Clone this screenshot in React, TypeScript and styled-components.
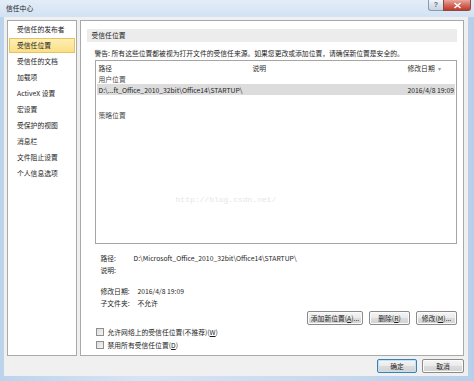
import React from "react";
import styled, { createGlobalStyle } from "styled-components";

const GlobalStyle = createGlobalStyle`
  html, body {
    margin: 0;
    padding: 0;
    background: #ffffff;
  }
  body {
    font-family: "Noto Sans CJK SC", "Noto Sans", sans-serif;
    font-size: 6.8px;
    color: #1e1e1e;
  }
  * {
    box-sizing: border-box;
  }
`;

const navItems = [
  "受信任的发布者",
  "受信任位置",
  "受信任的文档",
  "加载项",
  "ActiveX 设置",
  "宏设置",
  "受保护的视图",
  "消息栏",
  "文件阻止设置",
  "个人信息选项",
];

const App: React.FC = () => {
  return (
    <>
      <GlobalStyle />
      <Window>
        <TitleBar>
          <Title>信任中心</Title>
          <CaptionButtons>
            <HelpButton>?</HelpButton>
            <CloseButton>
              <svg width="9" height="7" viewBox="0 0 9 7">
                <path d="M1.5 1 L7.5 6 M7.5 1 L1.5 6" stroke="#ffffff" strokeWidth="1.6" />
              </svg>
            </CloseButton>
          </CaptionButtons>
        </TitleBar>

        <Client>
          <Main>
            <NavPanel>
              {navItems.map((item) => (
                <NavItem key={item} $active={item === "受信任位置"}>
                  {item}
                </NavItem>
              ))}
            </NavPanel>

            <ContentPanel>
              <SectionHeader>受信任位置</SectionHeader>
              <Body>
                <Warning>
                  警告: 所有这些位置都被视为打开文件的受信任来源。如果您更改或添加位置，请确保新位置是安全的。
                </Warning>

                <ListBox>
                  <HeaderRow>
                    <PathCol>路径</PathCol>
                    <DescCol>说明</DescCol>
                    <DateCol>
                      修改日期 <SortArrow>▾</SortArrow>
                    </DateCol>
                  </HeaderRow>
                  <GroupRow>用户位置</GroupRow>
                  <DataRow $selected>
                    <PathCol>D:\...ft_Office_2010_32bit\Office14\STARTUP\</PathCol>
                    <DescCol />
                    <DateCol $right>2016/4/8 19:09</DateCol>
                  </DataRow>
                  <GroupRow $gap>策略位置</GroupRow>
                  <Watermark>http://blog.csdn.net/</Watermark>
                </ListBox>

                <Details>
                  <DetailRow $labelWidth={33}>
                    <span>路径:</span>
                    <span>D:\Microsoft_Office_2010_32bit\Office14\STARTUP\</span>
                  </DetailRow>
                  <DetailRow $labelWidth={33}>
                    <span>说明:</span>
                    <span />
                  </DetailRow>
                  <DetailRow $labelWidth={37} $spaced>
                    <span>修改日期:</span>
                    <span>2016/4/8 19:09</span>
                  </DetailRow>
                  <DetailRow $labelWidth={37}>
                    <span>子文件夹:</span>
                    <span>不允许</span>
                  </DetailRow>
                </Details>

                <ButtonRow>
                  <Button $width={56}>
                    添加新位置(<U>A</U>)...
                  </Button>
                  <Button $width={41}>
                    删除(<U>R</U>)
                  </Button>
                  <Button $width={41}>
                    修改(<U>M</U>)...
                  </Button>
                </ButtonRow>

                <CheckRow>
                  <CheckBox />
                  <span>
                    允许网络上的受信任位置(不推荐)(<U>W</U>)
                  </span>
                </CheckRow>
                <CheckRow>
                  <CheckBox />
                  <span>
                    禁用所有受信任位置(<U>D</U>)
                  </span>
                </CheckRow>
              </Body>
            </ContentPanel>
          </Main>

          <Footer>
            <Button $width={40} $default>
              确定
            </Button>
            <Button $width={42}>取消</Button>
          </Footer>
        </Client>
      </Window>
    </>
  );
};

export default App;

const Window = styled.div`
  width: 474px;
  height: 381px;
  display: flex;
  flex-direction: column;
  background: linear-gradient(90deg, #bcd3ec 0%, #d6e5f5 30%, #cadcf0 60%, #b8cfe9 100%);
  overflow: hidden;
`;

const TitleBar = styled.div`
  height: 17px;
  display: flex;
  align-items: flex-start;
  padding-left: 6px;
  padding-right: 3px;
  background: linear-gradient(180deg, #e3edf8 0%, #d2e2f3 100%);
`;

const Title = styled.div`
  font-size: 6.8px;
  line-height: 16px;
  color: #1a1a1a;
`;

const CaptionButtons = styled.div`
  margin-left: auto;
  display: flex;
`;

const HelpButton = styled.div`
  width: 15px;
  height: 11px;
  border: 1px solid #8a9cb3;
  border-top: none;
  border-right: none;
  border-radius: 0 0 0 3px;
  background: linear-gradient(180deg, #f3f6fa 0%, #d7e0ea 55%, #c9d4e1 100%);
  color: #5b6b80;
  font-family: "Liberation Sans", sans-serif;
  font-size: 7px;
  font-weight: bold;
  line-height: 10px;
  text-align: center;
`;

const CloseButton = styled.div`
  width: 28px;
  height: 11px;
  border: 1px solid #8a4a44;
  border-top: none;
  border-radius: 0 0 3px 0;
  background: linear-gradient(180deg, #e7a89e 0%, #d46a5c 50%, #c0392b 100%);
  display: flex;
  align-items: center;
  justify-content: center;
`;

const Client = styled.div`
  flex: 1;
  margin: 0 6px 5px 4px;
  background: #f0f0f0;
  display: flex;
  flex-direction: column;
  padding: 3px 4px 0 3px;
`;

const Main = styled.div`
  flex: 1;
  display: flex;
  gap: 3px;
`;

const Panel = styled.div`
  background: #ffffff;
  border: 1px solid #a9a9a9;
`;

const NavPanel = styled(Panel)`
  width: 71px;
  padding: 0 1px;
  display: flex;
  flex-direction: column;
`;

const NavItem = styled.div<{ $active?: boolean }>`
  height: 15px;
  line-height: 13px;
  margin-top: 1px;
  padding-left: 7px;
  white-space: nowrap;
  border: 1px solid ${(p) => (p.$active ? "#e5c365" : "transparent")};
  background: ${(p) => (p.$active ? "linear-gradient(180deg, #fdeeb3 0%, #fbdf86 100%)" : "transparent")};
`;

const ContentPanel = styled(Panel)`
  flex: 1;
  padding: 8px 6px 0 6px;
  display: flex;
  flex-direction: column;
`;

const SectionHeader = styled.div`
  height: 13px;
  line-height: 13px;
  padding-left: 5px;
  background: #ececec;
  color: #1e1e1e;
`;

const Body = styled.div`
  padding-left: 8px;
  padding-right: 0;
  display: flex;
  flex-direction: column;
`;

const Warning = styled.div`
  margin-top: 6px;
  line-height: 10px;
  white-space: nowrap;
`;

const ListBox = styled.div`
  position: relative;
  margin-top: 2px;
  height: 184px;
  border: 1px solid #a5a5a5;
  background: #ffffff;
  padding: 0 1px;
`;

const Row = styled.div`
  display: flex;
  align-items: center;
  padding-left: 2px;
  padding-right: 1px;
`;

const HeaderRow = styled(Row)`
  height: 13px;
  color: #2b2b2b;
`;

const GroupRow = styled.div<{ $gap?: boolean }>`
  height: 10px;
  line-height: 10px;
  padding-left: 2px;
  margin-top: ${(p) => (p.$gap ? "15px" : "0")};
  color: #4a4a4a;
`;

const DataRow = styled(Row)<{ $selected?: boolean }>`
  height: 11px;
  background: ${(p) => (p.$selected ? "#dcdcdc" : "transparent")};
`;

const PathCol = styled.div`
  width: 154px;
  white-space: nowrap;
`;

const DescCol = styled.div`
  width: 155px;
`;

const DateCol = styled.div<{ $right?: boolean }>`
  flex: 1;
  white-space: nowrap;
  text-align: ${(p) => (p.$right ? "right" : "left")};
`;

const SortArrow = styled.span`
  color: #9a9a9a;
  font-size: 6px;
  margin-left: 2px;
`;

const Watermark = styled.div`
  position: absolute;
  left: 80px;
  top: 134px;
  font-family: "Liberation Mono", monospace;
  font-size: 8px;
  color: #e6e6e6;
  white-space: nowrap;
`;

const Details = styled.div`
  margin-top: 9px;
  padding-left: 6px;
  display: flex;
  flex-direction: column;
`;

const DetailRow = styled.div<{ $labelWidth: number; $spaced?: boolean }>`
  display: grid;
  grid-template-columns: ${(p) => p.$labelWidth}px 1fr;
  height: 11.5px;
  line-height: 11.5px;
  margin-top: ${(p) => (p.$spaced ? "10px" : "0")};
  white-space: nowrap;
`;

const ButtonRow = styled.div`
  margin-top: 2px;
  display: flex;
  justify-content: flex-end;
  gap: 6px;
`;

const Button = styled.div<{ $width: number; $default?: boolean }>`
  width: ${(p) => p.$width}px;
  height: 14px;
  border: 1px solid ${(p) => (p.$default ? "#3c7fb1" : "#8a8a8a")};
  border-radius: 2px;
  background: linear-gradient(180deg, #f6f6f6 0%, #eaeaea 48%, #dcdcdc 52%, #d2d2d2 100%);
  box-shadow: inset 0 0 0 1px ${(p) => (p.$default ? "#bfe3f7" : "#fbfbfb")};
  display: flex;
  align-items: center;
  justify-content: center;
  white-space: nowrap;
  color: #1e1e1e;
`;

const U = styled.span`
  text-decoration: underline;
`;

const CheckRow = styled.div`
  height: 13px;
  display: flex;
  align-items: center;
  gap: 4px;
  padding-left: 1px;
`;

const CheckBox = styled.div`
  width: 8px;
  height: 8px;
  border: 1px solid #8e8f8f;
  background: linear-gradient(135deg, #dcdcdc 0%, #f4f4f4 100%);
`;

const Footer = styled.div`
  height: 20px;
  display: flex;
  align-items: center;
  justify-content: flex-end;
  gap: 5px;
  padding-bottom: 1px;
`;
